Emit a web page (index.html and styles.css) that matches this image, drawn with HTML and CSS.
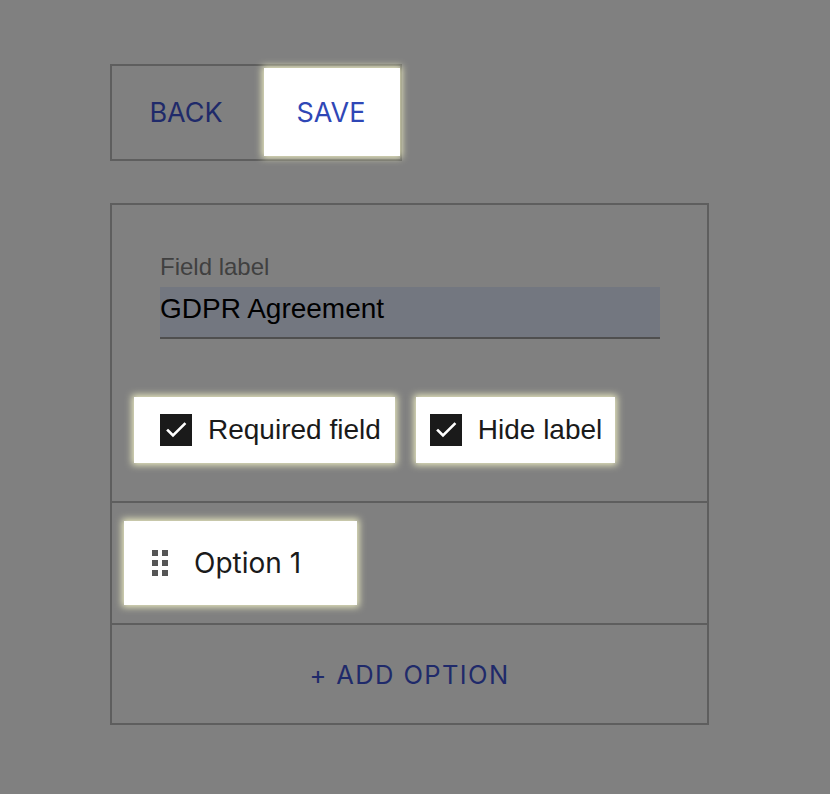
FILE: index.html
```html
<!DOCTYPE html>
<html>
<head>
<meta charset="utf-8">
<link rel="stylesheet" href="styles.css">
</head>
<body>
<div class="page">
  <div class="btn-group">
    <div class="btn btn-back">BACK</div>
    <div class="btn btn-save glow">SAVE</div>
  </div>
  <div class="card">
    <div class="card-main">
      <div class="field">
        <div class="field-label">Field label</div>
        <div class="field-input">GDPR Agreement</div>
      </div>
      <div class="checks">
        <div class="check check-first glow">
          <span class="box"><svg width="32" height="32" viewBox="0 0 32 32"><path d="M8 16.5 L13 21.5 L24.5 10" fill="none" stroke="#fff" stroke-width="2.6" stroke-linecap="square"/></svg></span>
          <span class="check-text">Required field</span>
        </div>
        <div class="check check-second glow">
          <span class="box"><svg width="32" height="32" viewBox="0 0 32 32"><path d="M8 16.5 L13 21.5 L24.5 10" fill="none" stroke="#fff" stroke-width="2.6" stroke-linecap="square"/></svg></span>
          <span class="check-text">Hide label</span>
        </div>
      </div>
    </div>
    <div class="options">
      <div class="option glow">
        <span class="dots"><i></i><i></i><i></i><i></i><i></i><i></i></span>
        <span class="option-text">Option 1</span>
      </div>
    </div>
    <div class="add">+ ADD OPTION</div>
  </div>
</div>
</body>
</html>
```
FILE: styles.css
```css
body {
  margin: 0;
  background: #808080;
  font-family: "Liberation Sans", Arial, sans-serif;
}
.page {
  padding: 64px 0 0 110px;
}
.glow {
  background: #fff;
  box-shadow: 0 0 7px 2px rgba(255, 255, 205, 0.85);
}
.btn-group {
  display: inline-flex;
  border: 2px solid #5e5e5e;
  padding: 2px 0 3px 0;
}
.btn {
  box-sizing: border-box;
  height: 88px;
  display: flex;
  align-items: center;
  justify-content: center;
  font-family: Inter, sans-serif;
  font-size: 27px;
}
.btn-back {
  width: 152px;
  padding-right: 4px;
  color: #1f2a6a;
}
.btn-save {
  width: 136px;
  padding-right: 2px;
  color: #2f47b6;
}
.card {
  margin-top: 42px;
  width: 595px;
  border: 2px solid #5e5e5e;
}
.card-main {
  padding: 48px 0 38px 22px;
}
.field {
  margin-left: 26px;
}
.field-label {
  font-size: 24px;
  line-height: 28px;
  color: #404040;
  margin-bottom: 6px;
}
.field-input {
  width: 500px;
  height: 43px;
  line-height: 43px;
  padding-bottom: 7px;
  background: #737780;
  border-bottom: 2px solid #4f4f4f;
  font-size: 28px;
  color: #000;
}
.checks {
  margin-top: 58px;
  display: flex;
  gap: 21px;
}
.check {
  height: 66px;
  display: flex;
  align-items: center;
}
.check-first {
  padding: 0 14px 0 26px;
}
.check-second {
  padding: 0 13px 0 14px;
}
.box {
  width: 32px;
  height: 32px;
  background: #1a1a1a;
  display: block;
}
.box svg {
  display: block;
}
.check-text {
  margin-left: 16px;
  font-size: 28px;
  color: #1a1a1a;
}
.options {
  border-top: 2px solid #5e5e5e;
  padding: 18px 0 18px 12px;
}
.option {
  width: 205px;
  height: 84px;
  padding-left: 28px;
  display: flex;
  align-items: center;
}
.dots {
  display: grid;
  grid-template-columns: 6px 6px;
  grid-auto-rows: 6px;
  gap: 4px;
}
.dots i {
  display: block;
  background: #555;
}
.option-text {
  margin-left: 26px;
  font-family: Inter, sans-serif;
  font-size: 28px;
  color: #1a1a1a;
}
.add {
  border-top: 2px solid #5e5e5e;
  height: 98px;
  display: flex;
  align-items: center;
  justify-content: center;
  font-family: Inter, sans-serif;
  font-size: 25.5px;
  letter-spacing: 1.4px;
  color: #1f2a6a;
}
```
